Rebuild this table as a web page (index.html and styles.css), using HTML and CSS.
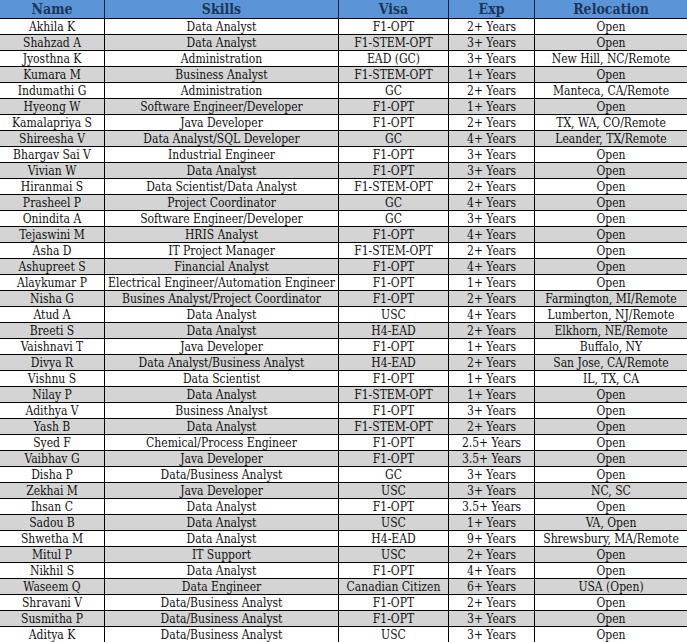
FILE: index.html
```html
<!DOCTYPE html>
<html>
<head>
<meta charset="utf-8">
<link rel="stylesheet" href="styles.css">
</head>
<body>
<div class="sheet">
  <div class="row head"><div class="c">Name</div><div class="c">Skills</div><div class="c">Visa</div><div class="c">Exp</div><div class="c">Relocation</div></div>
  <div class="row"><div class="c">Akhila K</div><div class="c">Data Analyst</div><div class="c">F1-OPT</div><div class="c">2+ Years</div><div class="c">Open</div></div>
  <div class="row alt"><div class="c">Shahzad A</div><div class="c">Data Analyst</div><div class="c">F1-STEM-OPT</div><div class="c">3+ Years</div><div class="c">Open</div></div>
  <div class="row"><div class="c">Jyosthna K</div><div class="c">Administration</div><div class="c">EAD (GC)</div><div class="c">3+ Years</div><div class="c">New Hill, NC/Remote</div></div>
  <div class="row alt"><div class="c">Kumara M</div><div class="c">Business Analyst</div><div class="c">F1-STEM-OPT</div><div class="c">1+ Years</div><div class="c">Open</div></div>
  <div class="row"><div class="c">Indumathi G</div><div class="c">Administration</div><div class="c">GC</div><div class="c">2+ Years</div><div class="c">Manteca, CA/Remote</div></div>
  <div class="row alt"><div class="c">Hyeong W</div><div class="c">Software Engineer/Developer</div><div class="c">F1-OPT</div><div class="c">1+ Years</div><div class="c">Open</div></div>
  <div class="row"><div class="c">Kamalapriya S</div><div class="c">Java Developer</div><div class="c">F1-OPT</div><div class="c">2+ Years</div><div class="c">TX, WA, CO/Remote</div></div>
  <div class="row alt"><div class="c">Shireesha V</div><div class="c">Data Analyst/SQL Developer</div><div class="c">GC</div><div class="c">4+ Years</div><div class="c">Leander, TX/Remote</div></div>
  <div class="row"><div class="c">Bhargav Sai V</div><div class="c">Industrial Engineer</div><div class="c">F1-OPT</div><div class="c">3+ Years</div><div class="c">Open</div></div>
  <div class="row alt"><div class="c">Vivian W</div><div class="c">Data Analyst</div><div class="c">F1-OPT</div><div class="c">3+ Years</div><div class="c">Open</div></div>
  <div class="row"><div class="c">Hiranmai S</div><div class="c">Data Scientist/Data Analyst</div><div class="c">F1-STEM-OPT</div><div class="c">2+ Years</div><div class="c">Open</div></div>
  <div class="row alt"><div class="c">Prasheel P</div><div class="c">Project Coordinator</div><div class="c">GC</div><div class="c">4+ Years</div><div class="c">Open</div></div>
  <div class="row"><div class="c">Onindita A</div><div class="c">Software Engineer/Developer</div><div class="c">GC</div><div class="c">3+ Years</div><div class="c">Open</div></div>
  <div class="row alt"><div class="c">Tejaswini M</div><div class="c">HRIS Analyst</div><div class="c">F1-OPT</div><div class="c">4+ Years</div><div class="c">Open</div></div>
  <div class="row"><div class="c">Asha D</div><div class="c">IT Project Manager</div><div class="c">F1-STEM-OPT</div><div class="c">2+ Years</div><div class="c">Open</div></div>
  <div class="row alt"><div class="c">Ashupreet S</div><div class="c">Financial Analyst</div><div class="c">F1-OPT</div><div class="c">4+ Years</div><div class="c">Open</div></div>
  <div class="row"><div class="c">Alaykumar P</div><div class="c">Electrical Engineer/Automation Engineer</div><div class="c">F1-OPT</div><div class="c">1+ Years</div><div class="c">Open</div></div>
  <div class="row alt"><div class="c">Nisha G</div><div class="c">Busines Analyst/Project Coordinator</div><div class="c">F1-OPT</div><div class="c">2+ Years</div><div class="c">Farmington, MI/Remote</div></div>
  <div class="row"><div class="c">Atud A</div><div class="c">Data Analyst</div><div class="c">USC</div><div class="c">4+ Years</div><div class="c">Lumberton, NJ/Remote</div></div>
  <div class="row alt"><div class="c">Breeti S</div><div class="c">Data Analyst</div><div class="c">H4-EAD</div><div class="c">2+ Years</div><div class="c">Elkhorn, NE/Remote</div></div>
  <div class="row"><div class="c">Vaishnavi T</div><div class="c">Java Developer</div><div class="c">F1-OPT</div><div class="c">1+ Years</div><div class="c">Buffalo, NY</div></div>
  <div class="row alt"><div class="c">Divya R</div><div class="c">Data Analyst/Business Analyst</div><div class="c">H4-EAD</div><div class="c">2+ Years</div><div class="c">San Jose, CA/Remote</div></div>
  <div class="row"><div class="c">Vishnu S</div><div class="c">Data Scientist</div><div class="c">F1-OPT</div><div class="c">1+ Years</div><div class="c">IL, TX, CA</div></div>
  <div class="row alt"><div class="c">Nilay P</div><div class="c">Data Analyst</div><div class="c">F1-STEM-OPT</div><div class="c">1+ Years</div><div class="c">Open</div></div>
  <div class="row"><div class="c">Adithya V</div><div class="c">Business Analyst</div><div class="c">F1-OPT</div><div class="c">3+ Years</div><div class="c">Open</div></div>
  <div class="row alt"><div class="c">Yash B</div><div class="c">Data Analyst</div><div class="c">F1-STEM-OPT</div><div class="c">2+ Years</div><div class="c">Open</div></div>
  <div class="row"><div class="c">Syed F</div><div class="c">Chemical/Process Engineer</div><div class="c">F1-OPT</div><div class="c">2.5+ Years</div><div class="c">Open</div></div>
  <div class="row alt"><div class="c">Vaibhav G</div><div class="c">Java Developer</div><div class="c">F1-OPT</div><div class="c">3.5+ Years</div><div class="c">Open</div></div>
  <div class="row"><div class="c">Disha P</div><div class="c">Data/Business Analyst</div><div class="c">GC</div><div class="c">3+ Years</div><div class="c">Open</div></div>
  <div class="row alt"><div class="c">Zekhai M</div><div class="c">Java Developer</div><div class="c">USC</div><div class="c">3+ Years</div><div class="c">NC, SC</div></div>
  <div class="row"><div class="c">Ihsan C</div><div class="c">Data Analyst</div><div class="c">F1-OPT</div><div class="c">3.5+ Years</div><div class="c">Open</div></div>
  <div class="row alt"><div class="c">Sadou B</div><div class="c">Data Analyst</div><div class="c">USC</div><div class="c">1+ Years</div><div class="c">VA, Open</div></div>
  <div class="row"><div class="c">Shwetha M</div><div class="c">Data Analyst</div><div class="c">H4-EAD</div><div class="c">9+ Years</div><div class="c">Shrewsbury, MA/Remote</div></div>
  <div class="row alt"><div class="c">Mitul P</div><div class="c">IT Support</div><div class="c">USC</div><div class="c">2+ Years</div><div class="c">Open</div></div>
  <div class="row"><div class="c">Nikhil S</div><div class="c">Data Analyst</div><div class="c">F1-OPT</div><div class="c">4+ Years</div><div class="c">Open</div></div>
  <div class="row alt"><div class="c">Waseem Q</div><div class="c">Data Engineer</div><div class="c">Canadian Citizen</div><div class="c">6+ Years</div><div class="c">USA (Open)</div></div>
  <div class="row"><div class="c">Shravani V</div><div class="c">Data/Business Analyst</div><div class="c">F1-OPT</div><div class="c">2+ Years</div><div class="c">Open</div></div>
  <div class="row alt"><div class="c">Susmitha P</div><div class="c">Data/Business Analyst</div><div class="c">F1-OPT</div><div class="c">3+ Years</div><div class="c">Open</div></div>
  <div class="row"><div class="c">Aditya K</div><div class="c">Data/Business Analyst</div><div class="c">USC</div><div class="c">3+ Years</div><div class="c">Open</div></div>
</div>
</body>
</html>
```
FILE: styles.css
```css
html, body {
  margin: 0;
  padding: 0;
  background: #ffffff;
}
.sheet {
  width: 687px;
  height: 642px;
  overflow: hidden;
  font-family: "DejaVu Serif Condensed", "DejaVu Serif", "Liberation Serif", serif;
  font-size: 12px;
  color: #111111;
}
.row {
  display: grid;
  grid-template-columns: 105px 234px 110px 86px 152px;
  height: 15px;
  border-bottom: 1px solid #000000;
  background: #ffffff;
}
.row.alt {
  background: #d4d4d4;
}
.row.head {
  height: 18px;
  background: #5b95d8;
  color: #1c3559;
  font-weight: bold;
  font-size: 14px;
}
.c {
  display: flex;
  align-items: center;
  justify-content: center;
  white-space: nowrap;
  overflow: hidden;
  border-right: 1px solid #000000;
  line-height: 1;
}
.c:last-child {
  border-right: none;
}
.head .c {
  border-right-color: #0e1f3a;
}
```
